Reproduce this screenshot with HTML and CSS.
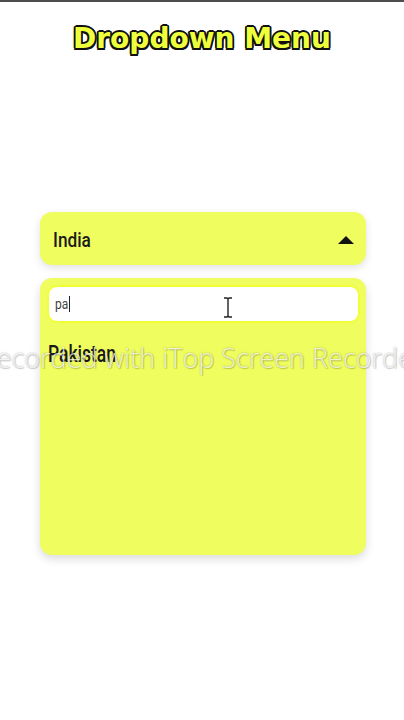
FILE: index.html
```html
<!DOCTYPE html>
<html lang="en">
<head>
<meta charset="utf-8">
<title>Dropdown Menu</title>
<link rel="stylesheet" href="styles.css">
</head>
<body>
<div class="page">
  <h1 class="title">Dropdown Menu</h1>
  <div class="dropdown">
    <div class="select">
      <span class="select-value">India</span>
      <svg class="caret" width="16" height="8" viewBox="0 0 16 8"><polygon points="0,8 16,8 8,0" fill="#111"/></svg>
    </div>
    <div class="panel">
      <div class="search">
        <span class="search-text">pa</span><span class="text-caret"></span>
        <svg class="ibeam" width="10" height="21" viewBox="0 0 10 21">
          <path d="M1 1h3l1 1 1-1h3M5 2v17M1 20h3l1-1 1 1h3" fill="none" stroke="#222" stroke-width="1.4"/>
        </svg>
      </div>
      <ul class="options">
        <li class="option"><span class="option-label">Pakistan</span></li>
      </ul>
    </div>
  </div>
  <div class="watermark">Recorded with iTop Screen Recorder</div>
</div>
</body>
</html>
```
FILE: styles.css
```css
html, body {
  margin: 0;
  padding: 0;
  background: #ffffff;
}
.page {
  position: relative;
  border-top: 2px solid #4d4d4d;
  min-height: 718px;
  overflow: hidden;
}
.title {
  margin: 20px 0 0;
  text-align: center;
  font-family: "DejaVu Sans", sans-serif;
  font-weight: bold;
  font-size: 28px;
  line-height: 34px;
  color: #eeff3c;
  text-shadow:
    -1.5px -1.5px 0 #111, 1.5px -1.5px 0 #111, -1.5px 1.5px 0 #111, 1.5px 1.5px 0 #111,
    0 -1.8px 0 #111, 0 1.8px 0 #111, -1.8px 0 0 #111, 1.8px 0 0 #111;
}
.dropdown {
  margin: 156px 38px 0 40px;
  display: flex;
  flex-direction: column;
  gap: 13px;
}
.select {
  height: 53px;
  background: #effd5e;
  border-radius: 12px;
  box-shadow: 0 3px 8px rgba(0, 0, 0, 0.12);
  display: flex;
  align-items: center;
  justify-content: space-between;
  padding: 0 12px 0 13px;
}
.select-value {
  display: inline-block;
  font-family: Roboto, sans-serif;
  font-weight: 500;
  font-size: 21px;
  color: #1a1a1a;
  margin-top: 2px;
  transform: scaleX(0.82);
  transform-origin: left center;
}
.caret {
  display: block;
  margin-top: 2px;
}
.panel {
  height: 277px;
  box-sizing: border-box;
  background: #effd5e;
  border-radius: 12px;
  box-shadow: 0 4px 10px rgba(0, 0, 0, 0.14);
  padding: 9px 8px 0 9px;
}
.search {
  position: relative;
  height: 34px;
  background: #ffffff;
  border-radius: 8px;
  box-shadow: 0 0 0 2px #f2ff36;
  display: flex;
  align-items: center;
  padding-left: 6px;
}
.search-text {
  display: inline-block;
  font-family: Roboto, sans-serif;
  font-size: 15px;
  color: #444;
  transform: scaleX(0.8);
  transform-origin: left center;
  margin-right: -3px;
}
.text-caret {
  display: inline-block;
  width: 1px;
  height: 16px;
  background: #222;
}
.ibeam {
  position: absolute;
  left: 174px;
  top: 10px;
}
.options {
  list-style: none;
  margin: 20px 0 0;
  padding: 0;
}
.option {
  font-family: Roboto, sans-serif;
  font-weight: 500;
  font-size: 23px;
  line-height: 28px;
  color: #1a1a1a;
  margin-left: -1px;
}
.option-label {
  display: inline-block;
  transform: scaleX(0.76);
  transform-origin: left center;
}
.watermark {
  position: absolute;
  left: 50%;
  top: 338px;
  transform: translateX(-50%);
  white-space: nowrap;
  font-family: "Open Sans", sans-serif;
  font-weight: 300;
  font-size: 27px;
  line-height: 36px;
  color: rgba(255, 255, 255, 0.75);
  text-shadow: 0 0 2px rgba(0, 0, 0, 0.3), 1px 1px 1px rgba(0, 0, 0, 0.15);
  pointer-events: none;
}
```
